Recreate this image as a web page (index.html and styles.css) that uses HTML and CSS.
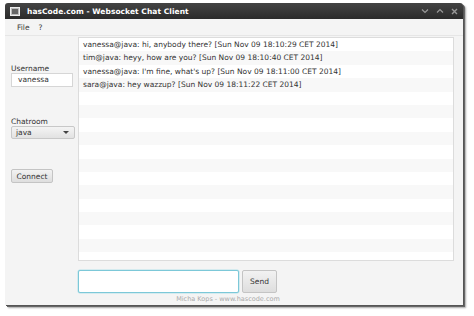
FILE: index.html
```html
<!DOCTYPE html>
<html>
<head>
<meta charset="utf-8">
<link rel="stylesheet" href="styles.css">
</head>
<body>
<div class="window">
  <div class="titlebar">
    <svg class="appicon" width="10" height="9" viewBox="0 0 10 9"><rect x="0.5" y="0.5" width="9" height="8" fill="#bbb" stroke="#eee"/><rect x="2" y="2" width="6" height="5" fill="#666"/></svg>
    <span class="title">hasCode.com - Websocket Chat Client</span>
    <div class="controls">
      <svg width="8" height="6" viewBox="0 0 8 6"><path d="M1 1.5 L4 4.5 L7 1.5" fill="none" stroke="#999" stroke-width="1.2"/></svg>
      <svg width="8" height="6" viewBox="0 0 8 6"><path d="M1 4.5 L4 1.5 L7 4.5" fill="none" stroke="#999" stroke-width="1.2"/></svg>
      <svg width="7" height="7" viewBox="0 0 7 7"><path d="M1 1 L6 6 M6 1 L1 6" fill="none" stroke="#999" stroke-width="1.4"/></svg>
    </div>
  </div>
  <div class="menubar">
    <span class="menu">File</span>
    <span class="menu">?</span>
  </div>
  <div class="content">
    <div class="side">
      <label class="lbl user-lbl">Username</label>
      <div class="field">vanessa</div>
      <label class="lbl room-lbl">Chatroom</label>
      <div class="select"><span>java</span><span class="caret"></span></div>
      <div class="btn connect">Connect</div>
    </div>
    <div class="main">
      <div class="list">
        <div class="row">vanessa@java: hi, anybody there? [Sun Nov 09 18:10:29 CET 2014]</div>
        <div class="row">tim@java: heyy, how are you? [Sun Nov 09 18:10:40 CET 2014]</div>
        <div class="row">vanessa@java: I'm fine, what's up? [Sun Nov 09 18:11:00 CET 2014]</div>
        <div class="row">sara@java: hey wazzup? [Sun Nov 09 18:11:22 CET 2014]</div>
        <div class="row"></div><div class="row"></div><div class="row"></div><div class="row"></div>
        <div class="row"></div><div class="row"></div><div class="row"></div><div class="row"></div>
        <div class="row"></div><div class="row"></div><div class="row"></div><div class="row"></div>
        <div class="row"></div>
      </div>
      <div class="inputrow">
        <div class="msg"></div>
        <div class="btn send">Send</div>
      </div>
    </div>
  </div>
  <div class="footer">Micha Kops - www.hascode.com</div>
</div>
</body>
</html>
```
FILE: styles.css
```css
html, body { margin: 0; padding: 0; background: #fff; }
body { width: 474px; height: 316px; overflow: hidden; font-family: "DejaVu Sans", sans-serif; font-size: 7.5px; color: #333; }
.window {
  margin: 3px 0 0 5px;
  width: 458px;
  height: 302px;
  background: #f4f4f4;
  box-shadow: 1px 1px 0 #555, 2px 2px 0 #666, 3px 3px 2px rgba(0,0,0,0.35);
  display: flex; flex-direction: column;
  border-radius: 3px 3px 0 0;
  overflow: hidden;
}
.titlebar {
  height: 16px; flex: none;
  background: linear-gradient(#444, #2b2b2b);
  display: flex; align-items: center;
  padding: 0 5px 0 5px;
}
.appicon { margin-right: 7px; }
.title { color: #fff; font-weight: bold; font-size: 7.5px; letter-spacing: 0.05px; }
.controls { margin-left: auto; display: flex; gap: 7px; align-items: center; }
.menubar {
  height: 16px; flex: none;
  display: flex; align-items: center; gap: 9px;
  padding-left: 12px;
  border-bottom: 1px solid #e6e6e6;
  font-size: 7.5px;
}
.menu { color: #3a3a3a; }
.content { flex: 1; display: flex; min-height: 0; }
.side { width: 73px; box-sizing: border-box; flex: none; padding: 28px 0 0 6px; display: flex; flex-direction: column; align-items: flex-start; }
.lbl { font-size: 7.5px; color: #333; line-height: 9px; }
.field {
  width: 54px; height: 12px; background: #fff; border: 1px solid #d6d6d6;
  padding-left: 6px; line-height: 12px; font-size: 7.5px; color: #333;
}
.room-lbl { margin-top: 30px; }
.select {
  width: 53px; height: 11px; border: 1px solid #c8c8c8; border-radius: 2px;
  background: linear-gradient(#f4f4f4, #e2e2e2);
  display: flex; align-items: center; justify-content: space-between;
  padding: 0 5px 0 4px; font-size: 7.5px;
}
.caret { width: 0; height: 0; border-left: 3px solid transparent; border-right: 3px solid transparent; border-top: 3px solid #444; }
.btn {
  border: 1px solid #c4c4c4; border-radius: 2px;
  background: linear-gradient(#f2f2f2, #dedede);
  display: flex; align-items: center; justify-content: center;
  font-size: 7.5px; color: #333;
}
.connect { margin-top: 30px; width: 40px; height: 12px; }
.main { flex: 1; display: flex; flex-direction: column; padding: 1px 9px 0 0; min-width: 0; }
.list {
  height: 222px; border: 1px solid #dcdcdc; background: #fff; overflow: hidden;
}
.row { height: 13.4px; line-height: 13.4px; padding-left: 4px; white-space: nowrap; color: #333; }
.row:nth-child(even) { background: #f8f8f8; }
.inputrow { display: flex; gap: 3px; margin-top: 9px; }
.msg { width: 159px; height: 21px; border: 1px solid #7cc8d8; border-radius: 2px; background: #fff; box-shadow: 0 0 0 0.5px #b6e2ea; }
.send { width: 33px; height: 21px; }
.footer { text-align: center; font-size: 6.5px; color: #aaa; padding: 2px 12px 0 0; flex: none; height: 10px; }
```
